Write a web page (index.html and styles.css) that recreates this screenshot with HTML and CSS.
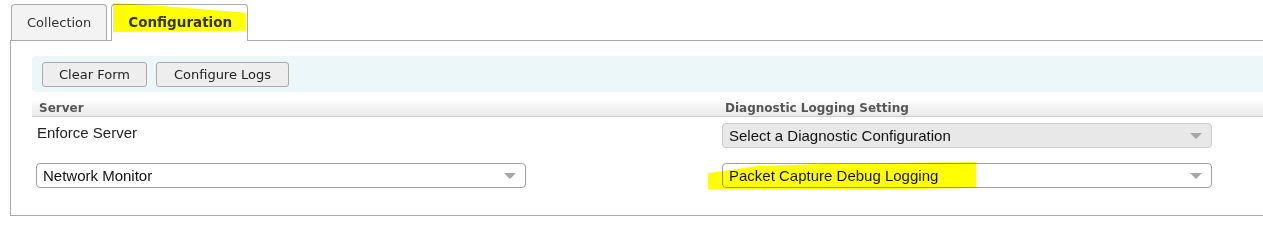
FILE: index.html
```html
<!DOCTYPE html>
<html>
<head>
<meta charset="utf-8">
<link rel="stylesheet" href="styles.css">
</head>
<body>
<div class="page">
  <div class="tabs">
    <div class="tab">Collection</div>
    <div class="tab tab-active">Configuration</div>
  </div>
  <div class="panel">
    <div class="toolbar">
      <button class="btn btn-clear">Clear Form</button>
      <button class="btn btn-logs">Configure Logs</button>
    </div>
    <div class="table">
      <div class="head">
        <div class="hcell">Server</div>
        <div class="hcell">Diagnostic Logging Setting</div>
      </div>
      <div class="rows">
        <div class="row">
          <div class="cell-left"><span class="label">Enforce Server</span></div>
          <div class="cell-right"><div class="select select-disabled">Select a Diagnostic Configuration<span class="arrow"></span></div></div>
        </div>
        <div class="row">
          <div class="cell-left"><div class="select">Network Monitor<span class="arrow"></span></div></div>
          <div class="cell-right"><div class="select">Packet Capture Debug Logging<span class="arrow"></span></div></div>
        </div>
      </div>
    </div>
  </div>
  <div class="mark mark-tab"></div>
  <div class="mark mark-select"></div>
</div>
</body>
</html>
```
FILE: styles.css
```css
html, body {
  margin: 0;
  padding: 0;
  background: #ffffff;
  overflow: hidden;
}
body {
  width: 1263px;
  height: 239px;
}
.page {
  position: relative;
  padding-top: 4px;
  padding-left: 10px;
  font-family: "DejaVu Sans", Verdana, sans-serif;
}
.tabs {
  display: flex;
  gap: 4px;
  padding-left: 1px;
  height: 36px;
  align-items: flex-end;
}
.tab {
  box-sizing: border-box;
  height: 36px;
  padding: 0 15px;
  border: 1px solid #aaaaaa;
  border-bottom: none;
  border-radius: 4px 4px 0 0;
  background: #f3f3f3;
  color: #333333;
  font-size: 13px;
  line-height: 35px;
}
.tab-active {
  background: #ffffff;
  font-weight: bold;
  font-size: 13.5px;
  color: #333333;
  height: 37px;
  margin-bottom: -1px;
  position: relative;
  z-index: 1;
  padding: 0 15px 1px 16px;
}
.panel {
  box-sizing: border-box;
  width: 1300px;
  height: 176px;
  border: 1px solid #aaaaaa;
  border-right: none;
  padding: 15px 0 0 21px;
}
.toolbar {
  display: flex;
  gap: 9px;
  height: 36px;
  box-sizing: border-box;
  padding: 6px 10px;
  background: #ecf7fa;
  border-radius: 4px 0 0 4px;
}
.btn {
  box-sizing: border-box;
  height: 25px;
  padding: 0;
  border: 1px solid #aaaaaa;
  border-radius: 3px;
  background: #eeeeee;
  color: #222222;
  font-family: "DejaVu Sans", Verdana, sans-serif;
  font-size: 13px;
  line-height: 23px;
}
.btn-clear { width: 105px; }
.btn-logs { width: 133px; }
.table {
  margin-top: 6px;
}
.head {
  display: grid;
  grid-template-columns: 690px 1fr;
  height: 19px;
  box-sizing: border-box;
  border-bottom: 1px solid #cccccc;
  background: linear-gradient(to bottom, #ffffff 0%, #f6f6f6 40%, #eaeaea 100%);
}
.hcell {
  font-size: 12px;
  font-weight: bold;
  color: #555555;
  line-height: 20px;
  padding-left: 7px;
}
.hcell + .hcell {
  padding-left: 3px;
}
.rows {
  display: flex;
  flex-direction: column;
  gap: 15px;
  padding-top: 6px;
}
.row {
  display: grid;
  grid-template-columns: 690px 1fr;
  height: 25px;
}
.cell-left {
  padding-left: 4px;
}
.label {
  display: block;
  font-family: "Liberation Sans", Arial, sans-serif;
  font-size: 15px;
  color: #222222;
  line-height: 18px;
  padding-left: 1px;
  margin-top: 1px;
}
.select {
  position: relative;
  box-sizing: border-box;
  width: 490px;
  height: 25px;
  border: 1px solid #a0a0a0;
  border-radius: 4px;
  background: #ffffff;
  padding-left: 6px;
  font-family: "Liberation Sans", Arial, sans-serif;
  font-size: 15px;
  line-height: 23px;
  color: #111111;
}
.select-disabled {
  background: #e8e8e8;
  border-color: #cccccc;
}
.arrow {
  position: absolute;
  right: 9px;
  top: 9px;
  width: 0;
  height: 0;
  border-left: 6px solid transparent;
  border-right: 6px solid transparent;
  border-top: 6px solid #a6a6a6;
}
.mark {
  position: absolute;
  background: #ffff00;
  mix-blend-mode: multiply;
  z-index: 5;
}
.mark-tab {
  left: 113px;
  top: 3px;
  width: 132px;
  height: 29px;
  clip-path: polygon(0 0, 30% 8%, 100% 34%, 100% 96%, 0 100%);
}
.mark-select {
  left: 708px;
  top: 162px;
  width: 268px;
  height: 28px;
  clip-path: polygon(0 40%, 18% 14%, 45% 6%, 100% 0, 100% 92%, 60% 100%, 0 96%);
}
```
